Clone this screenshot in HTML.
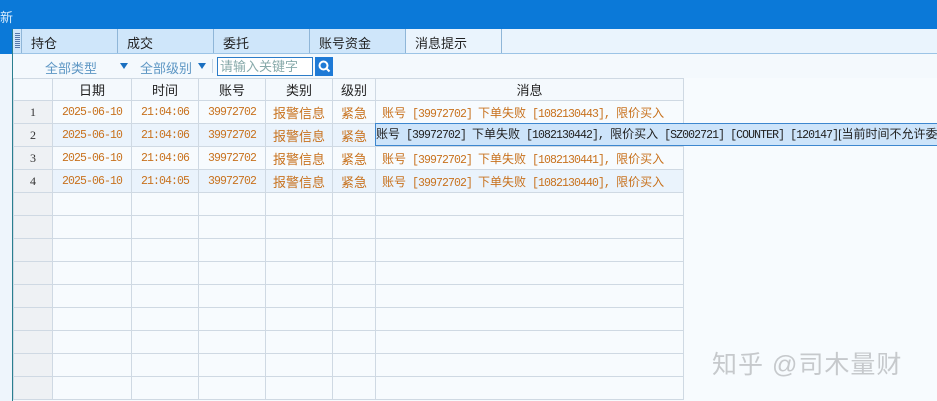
<!DOCTYPE html>
<html><head><meta charset="utf-8"><style>
*{margin:0;padding:0;box-sizing:border-box}
html{width:937px;height:401px;overflow:hidden}
body{width:937px;height:401px;overflow:hidden;background:#f7fbfe;font-family:"Liberation Sans","Noto Sans CJK SC",sans-serif;font-size:12px;position:relative}
.abs{position:absolute}
.mo{font-family:"Liberation Mono",monospace;font-size:11.5px;letter-spacing:-0.9px}
#top{left:0;top:0;width:937px;height:29px;background:#0b79d8;color:#d7ebfb;font-size:13px;padding:7px 0 0 0}
#ls{left:0;top:29px;width:12px;height:25px;background:#0b79d8}
#ls2{left:0;top:54px;width:12px;height:347px;background:#eef5fc}
#vl{left:12px;top:29px;width:1px;height:372px;background:#2a7f8f}
#tabs{left:13px;top:29px;width:924px;height:25px;background:#eaf4fd;border-bottom:1px solid #9cc4e6}
.tab{position:absolute;top:0;height:24px;background:#cfe6fa;border-right:1px solid #8fb6d8;font-size:13px;padding:4px 0 0 9px;color:#222}
#grip{left:0;width:9px;background:#cfe6fa;border-right:1px solid #8fb6d8;position:absolute;top:0;height:24px}
#grip i{position:absolute;left:2px;top:4px;width:5px;height:15px;background:repeating-linear-gradient(#5577aa 0 1px,#cfe6fa 1px 2px)}
#tb{left:13px;top:54px;width:924px;height:24px;background:#f4f9fd}
.tbt{position:absolute;top:4px;color:#5d96c4;font-size:13px}
.tri{position:absolute;top:9px;width:0;height:0;border-left:4px solid transparent;border-right:4px solid transparent;border-top:6px solid #1a6fc0}
#inp{left:217px;top:57px;width:96px;height:19px;border:1px solid #2c7cc8;background:#fff;color:#8aa;font-size:13px;padding:0 0 0 2px;line-height:17px}
#srch{left:315px;top:57px;width:18px;height:19px;background:#1e7ad6}
table{position:absolute;left:13px;top:78px;border-collapse:collapse;table-layout:fixed}
td{height:23px;border:1px solid #cfd9e3;text-align:center;color:#c8721e;font-size:12px;white-space:nowrap;overflow:visible;padding:0}
tr.h td{height:22px;color:#222;font-size:13px;background:#f4f9fd}
td.n{background:#eef1f4;color:#333;font-family:"Liberation Serif",serif}
td.m{text-align:left;padding-left:6px}
tr.alt td{background:#eaf3fc}
tr.alt td.n{background:#eef1f4}
#sel{left:375px;top:123px;width:562px;height:23px;background:#cde4fa;border:1px solid #3d87cf;border-right:none;color:#222;font-size:12px;line-height:21px;white-space:nowrap;overflow:hidden}
#wm{left:712px;top:345px;font-size:25px;color:#c6c9cc;letter-spacing:1px}
</style></head><body>
<div id="top" class="abs">新</div>
<div id="ls" class="abs"></div><div id="ls2" class="abs"></div>
<div id="tabs" class="abs">
<div id="grip"><i></i></div>
<div class="tab" style="left:9px;width:96px">持仓</div>
<div class="tab" style="left:105px;width:96px">成交</div>
<div class="tab" style="left:201px;width:96px">委托</div>
<div class="tab" style="left:297px;width:96px">账号资金</div>
<div class="tab" style="left:393px;width:96px;background:#eaf4fd">消息提示</div>
</div>
<div id="vl" class="abs"></div>
<div id="tb" class="abs">
<span class="tbt" style="left:32px">全部类型</span><span class="tri" style="left:107px"></span>
<span class="tbt" style="left:127px">全部级别</span><span class="tri" style="left:185px"></span>
<span class="abs" style="left:199px;top:5px;width:1px;height:14px;background:#c5d5e5"></span>
</div>
<div id="inp" class="abs">请输入关键字</div>
<div id="srch" class="abs"><svg width="18" height="19"><circle cx="8.5" cy="8.5" r="4" stroke="#fff" stroke-width="2" fill="none"/><line x1="11.5" y1="11.5" x2="14.5" y2="14.5" stroke="#fff" stroke-width="2"/></svg></div>
<table>
<colgroup><col style="width:39px"><col style="width:79px"><col style="width:67px"><col style="width:67px"><col style="width:67px"><col style="width:43px"><col style="width:308px"></colgroup>
<tr class="h"><td class="n" style="background:#f4f9fd"></td><td>日期</td><td>时间</td><td>账号</td><td>类别</td><td>级别</td><td>消息</td></tr>
<tr><td class="n">1</td><td class="mo">2025-06-10</td><td class="mo">21:04:06</td><td class="mo">39972702</td><td style="font-size:13px">报警信息</td><td style="font-size:13px">紧急</td><td class="m">账号<span class="mo"> [39972702] </span>下单失败<span class="mo"> [1082130443], </span>限价买入</td></tr>
<tr class="alt"><td class="n">2</td><td class="mo">2025-06-10</td><td class="mo">21:04:06</td><td class="mo">39972702</td><td style="font-size:13px">报警信息</td><td style="font-size:13px">紧急</td><td class="m"></td></tr>
<tr><td class="n">3</td><td class="mo">2025-06-10</td><td class="mo">21:04:06</td><td class="mo">39972702</td><td style="font-size:13px">报警信息</td><td style="font-size:13px">紧急</td><td class="m">账号<span class="mo"> [39972702] </span>下单失败<span class="mo"> [1082130441], </span>限价买入</td></tr>
<tr class="alt"><td class="n">4</td><td class="mo">2025-06-10</td><td class="mo">21:04:05</td><td class="mo">39972702</td><td style="font-size:13px">报警信息</td><td style="font-size:13px">紧急</td><td class="m">账号<span class="mo"> [39972702] </span>下单失败<span class="mo"> [1082130440], </span>限价买入</td></tr>
<tr><td class="n"></td><td></td><td></td><td></td><td></td><td></td><td></td></tr>
<tr><td class="n"></td><td></td><td></td><td></td><td></td><td></td><td></td></tr>
<tr><td class="n"></td><td></td><td></td><td></td><td></td><td></td><td></td></tr>
<tr><td class="n"></td><td></td><td></td><td></td><td></td><td></td><td></td></tr>
<tr><td class="n"></td><td></td><td></td><td></td><td></td><td></td><td></td></tr>
<tr><td class="n"></td><td></td><td></td><td></td><td></td><td></td><td></td></tr>
<tr><td class="n"></td><td></td><td></td><td></td><td></td><td></td><td></td></tr>
<tr><td class="n"></td><td></td><td></td><td></td><td></td><td></td><td></td></tr>
<tr><td class="n" style="height:3px"></td><td style="height:3px"></td><td></td><td></td><td></td><td></td><td></td></tr>
</table>
<div id="sel" class="abs">账号<span class="mo"> [39972702] </span>下单失败<span class="mo"> [1082130442], </span>限价买入<span class="mo"> [SZ002721] [COUNTER] [120147]</span>[当前时间不允许委托]</div>
<div id="wm" class="abs">知乎 @司木量财</div>
</body></html>
